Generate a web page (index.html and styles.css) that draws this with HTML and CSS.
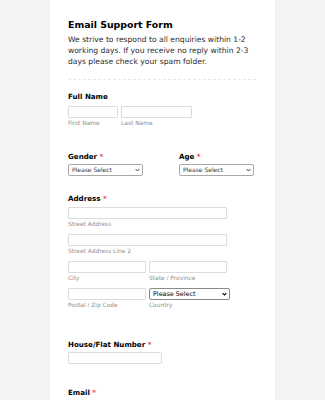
FILE: index.html
```html
<!DOCTYPE html>
<html lang="en">
<head>
    <meta charset="UTF-8">
    <title>Email Support Form</title>
    <link rel="stylesheet" href="styles.css">
</head>
<body>
    <div class="form-card">
        <div class="form-header">
            <h2 class="form-title">Email Support Form</h2>
            <p class="form-desc">We strive to respond to all enquiries within 1-2 working days. If you receive no reply within 2-3 days please check your spam folder.</p>
        </div>

        <div class="form-line line-name">
            <label class="form-label">Full Name</label>
            <div class="field-row">
                <div class="sub-field">
                    <input type="text" class="input w-first">
                    <span class="sub-label">First Name</span>
                </div>
                <div class="sub-field">
                    <input type="text" class="input w-last">
                    <span class="sub-label">Last Name</span>
                </div>
            </div>
        </div>

        <div class="form-line line-choice two-col">
            <div class="col">
                <label class="form-label">Gender <span class="req">*</span></label>
                <div class="select-wrap w-select">
                    <select class="select"><option>Please Select</option></select>
                    <svg class="chevron" viewBox="0 0 8 5" width="5" height="4"><path d="M1 1 L4 4 L7 1" fill="none" stroke="#333" stroke-width="1.6"/></svg>
                </div>
            </div>
            <div class="col">
                <label class="form-label">Age <span class="req">*</span></label>
                <div class="select-wrap w-select">
                    <select class="select"><option>Please Select</option></select>
                    <svg class="chevron" viewBox="0 0 8 5" width="5" height="4"><path d="M1 1 L4 4 L7 1" fill="none" stroke="#333" stroke-width="1.6"/></svg>
                </div>
            </div>
        </div>

        <div class="form-line line-address">
            <label class="form-label">Address <span class="req">*</span></label>
            <div class="sub-field">
                <input type="text" class="input w-full">
                <span class="sub-label">Street Address</span>
            </div>
            <div class="sub-field">
                <input type="text" class="input w-full">
                <span class="sub-label">Street Address Line 2</span>
            </div>
            <div class="field-row">
                <div class="sub-field">
                    <input type="text" class="input w-half">
                    <span class="sub-label">City</span>
                </div>
                <div class="sub-field">
                    <input type="text" class="input w-half">
                    <span class="sub-label">State / Province</span>
                </div>
            </div>
            <div class="field-row">
                <div class="sub-field">
                    <input type="text" class="input w-half">
                    <span class="sub-label">Postal / Zip Code</span>
                </div>
                <div class="sub-field">
                    <div class="select-wrap country">
                        <select class="select select-dark"><option>Please Select</option></select>
                        <svg class="chevron" viewBox="0 0 8 5" width="5" height="4"><path d="M1 1 L4 4 L7 1" fill="none" stroke="#000" stroke-width="1.7"/></svg>
                    </div>
                    <span class="sub-label">Country</span>
                </div>
            </div>
        </div>

        <div class="form-line line-house">
            <label class="form-label">House/Flat Number <span class="req">*</span></label>
            <input type="text" class="input w-house">
        </div>

        <div class="form-line line-email">
            <label class="form-label">Email <span class="req">*</span></label>
        </div>
    </div>
</body>
</html>
```

FILE: styles.css
```css
* {
    margin: 0;
    padding: 0;
    box-sizing: border-box;
}

html, body {
    height: 400px;
    overflow: hidden;
}

body {
    font-family: "DejaVu Sans", Verdana, sans-serif;
    background: #f3f3f3;
    color: #2c3345;
}

.form-card {
    display: flex;
    flex-direction: column;
    align-items: flex-start;
    background: #ffffff;
    width: 225px;
    margin-left: 50px;
    min-height: 400px;
    padding: 19px 18px 0 18px;
}

.form-header {
    align-self: stretch;
    padding-bottom: 12px;
    border-bottom: 1px dashed #e8e8e8;
    margin-right: 1px;
}

.form-title {
    font-size: 9.4px;
    font-weight: bold;
    color: #000;
    line-height: 12px;
}

.form-desc {
    font-size: 7.6px;
    line-height: 11px;
    color: #2c2c2c;
    margin-top: 3px;
}

/* vertical rhythm of each question */
.line-name { margin-top: 12px; }
.line-choice { margin-top: 19px; }
.line-address { margin-top: 18px; }
.line-house { margin-top: 25px; }
.line-email { margin-top: 24px; }

.form-label {
    display: block;
    font-size: 7.1px;
    font-weight: bold;
    color: #000;
    line-height: 10px;
    margin-bottom: 3px;
}

.line-name .form-label { margin-bottom: 4px; }
.line-choice .form-label,
.line-house .form-label { margin-bottom: 2px; }

.req {
    color: #f23a3c;
}

.field-row {
    display: flex;
    gap: 3px;
}

.sub-field {
    display: flex;
    flex-direction: column;
    margin-bottom: 6px;
}

.sub-label {
    font-size: 5.9px;
    color: #909090;
    line-height: 8px;
    margin-top: 1px;
}

.input {
    display: block;
    height: 12px;
    border: 1px solid #dcdcdc;
    border-radius: 1px;
    background: #fff;
}

.w-first { width: 50px; }
.w-last { width: 71px; }
.w-full { width: 159px; }
.w-half { width: 78px; }
.w-house { width: 94px; }

.two-col {
    display: flex;
    gap: 36px;
}

.select-wrap {
    position: relative;
    height: 12px;
}

.select {
    appearance: none;
    -webkit-appearance: none;
    display: block;
    width: 100%;
    height: 12px;
    font-family: "DejaVu Sans", Verdana, sans-serif;
    font-size: 6px;
    line-height: 10px;
    padding: 0 0 0 3px;
    border: 1px solid #a8a8a8;
    border-radius: 2px;
    background: #fff;
    color: #333;
}

.select-dark {
    font-size: 6.4px;
    color: #000;
    border-color: #8a8a8a;
}

.chevron {
    position: absolute;
    right: 3px;
    top: 4px;
}

.w-select { width: 75px; }

.country {
    width: 81px;
}
```
